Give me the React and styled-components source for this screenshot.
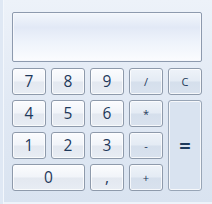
import React from "react";
import styled, { createGlobalStyle } from "styled-components";

const Global = createGlobalStyle`
  html, body { margin: 0; padding: 0; }
  body { width: 212px; height: 204px; overflow: hidden; }
`;

const Window = styled.div`
  box-sizing: border-box;
  width: 212px;
  height: 204px;
  padding: 12px 10px 0 12px;
  background: linear-gradient(#edf2f9 0%, #e1e9f4 50%, #d9e3f0 100%);
  box-shadow: inset 3px 0 0 #dfe8f4, inset 4px 0 0 #f3f7fc, inset 0 -2px 0 #eef3fa;
  font-family: "Open Sans", "Noto Sans", sans-serif;
  display: flex;
  flex-direction: column;
  gap: 6px;
`;

const Display = styled.div`
  box-sizing: border-box;
  width: 190px;
  height: 50px;
  border: 1px solid #8d9aae;
  border-radius: 2px;
  background: linear-gradient(#f2f6fc 0%, #e2e9f6 30%, #eef3fb 60%, #fbfcfe 100%);
  box-shadow: inset 0 0 0 1px #f6f8fc;
`;

const Pad = styled.div`
  display: grid;
  grid-template-columns: repeat(5, 34px);
  grid-template-rows: repeat(4, 27px);
  gap: 5px;
`;

const Key = styled.div`
  box-sizing: border-box;
  display: flex;
  align-items: center;
  justify-content: center;
  border: 1px solid #8e9aab;
  border-radius: 3px;
  color: #1e395b;
  font-size: ${(p) => (p.$op ? "11px" : "15.5px")};
  grid-column: ${(p) => p.$col || "auto"};
  grid-row: ${(p) => p.$row || "auto"};
  background: ${(p) =>
    p.$op
      ? "linear-gradient(#eef3f9 0%, #e4ebf4 48%, #d5dfec 52%, #d9e2ee 100%)"
      : "linear-gradient(#fbfcfe 0%, #f1f4f9 48%, #e3e8f0 52%, #e8edf4 100%)"};
  box-shadow: inset 0 0 0 1px rgba(255, 255, 255, 0.75);
  padding-bottom: 1px;
`;

const Equals = styled(Key)`
  background: #d9e3f0;
  border-color: #98a5b6;
  font-size: 20px;
  font-weight: 700;
`;

export default function App() {
  return (
    <>
      <Global />
      <Window>
        <Display />
        <Pad>
          <Key>7</Key>
          <Key>8</Key>
          <Key>9</Key>
          <Key $op>/</Key>
          <Key $op>C</Key>
          <Key>4</Key>
          <Key>5</Key>
          <Key>6</Key>
          <Key $op>*</Key>
          <Equals $op $col="5" $row="2 / span 3">=</Equals>
          <Key>1</Key>
          <Key>2</Key>
          <Key>3</Key>
          <Key $op>-</Key>
          <Key $col="1 / span 2">0</Key>
          <Key>,</Key>
          <Key $op>+</Key>
        </Pad>
      </Window>
    </>
  );
}
